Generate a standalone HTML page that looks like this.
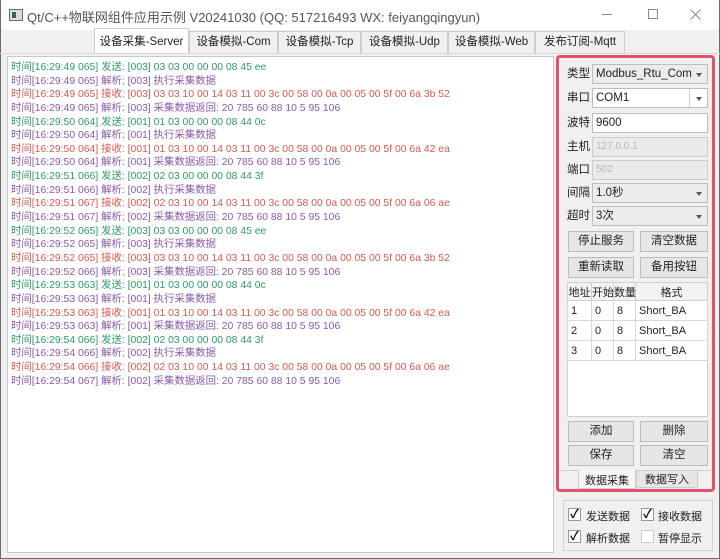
<!DOCTYPE html>
<html><head><meta charset="utf-8"><style>
*{box-sizing:border-box;margin:0;padding:0}
body{width:720px;height:559px;overflow:hidden;background:#f0f0f0;font-family:"Liberation Sans","Noto Sans CJK SC",sans-serif;font-size:11px;color:#222;position:relative}
.a{position:absolute}
#win{left:0;top:0;width:720px;height:559px;border:1px solid #6a6a6a;border-top:none}
#title{left:0;top:0;width:720px;height:30px;background:#fff;font-size:13px;color:#555}
.tab{position:absolute;top:31px;height:22px;border:1px solid #ccc;border-bottom:none;background:#f0f0f0;text-align:center;line-height:21px;font-size:11.5px;color:#222}
.tab.sel{top:28px;height:25px;background:#fff;line-height:26px}
#log{left:7px;top:56px;width:547px;height:497px;background:#fff;border:1px solid #c8c8c8;padding:4px 0 0 3px}
#log div{height:13.65px;line-height:13.65px;font-size:10.4px;white-space:nowrap}
.g{color:#2f9a6a}.p{color:#8a5aab}.r{color:#d65a55}
#panel{left:556px;top:55px;width:159px;height:437px;border:3px solid #e8506a;border-radius:4px;background:#f0f0f0}
.lbl{position:absolute;left:567px;font-size:11.5px;line-height:20px;height:20px}
.inp{position:absolute;left:592px;width:116px;height:20px;border:1px solid #bdbdbd;background:#fff;padding-left:3px;line-height:18px;font-size:11.5px}
.cb{background:#ececec}
.dis{background:#eaeaea;color:#b8b8b8;border-color:#ccc}
.arr{position:absolute;right:5px;top:8px;border-left:3px solid transparent;border-right:3px solid transparent;border-top:4px solid #555}
.btn{position:absolute;height:21px;border:1px solid #bcbcbc;background:#e6e6e6;text-align:center;line-height:19px;font-size:11.5px}
table{position:absolute;left:567px;top:282px;width:141px;border-collapse:collapse;font-size:11px;table-layout:fixed}
td{border:1px solid #d8d8d8;height:20px;padding-left:3px;background:#fff;white-space:nowrap}
th{border:1px solid #d0d0d0;height:18px;font-weight:normal;background:#f2f2f2;white-space:nowrap;padding:0;font-size:11px}
.chk{position:absolute;width:13px;height:13px;border:1px solid #999;background:#fff;font-size:12px;line-height:11px;text-align:center;font-weight:bold;color:#111}
</style></head><body>
<div id="title" class="a">
<div class="a" style="left:9px;top:9px;width:14px;height:12px;border:1px solid #666;background:#ddd"><div class="a" style="left:2px;top:2px;width:4px;height:6px;background:#2a6a60"></div></div>
<div class="a" style="left:27px;top:7px">Qt/C++物联网组件应用示例 V20241030 (QQ: 517216493 WX: feiyangqingyun)</div>
<div class="a" style="left:602px;top:14px;width:10px;height:1px;background:#888"></div>
<div class="a" style="left:648px;top:9px;width:10px;height:10px;border:1px solid #888"></div>
<svg class="a" style="left:690px;top:9px" width="11" height="11"><path d="M0.5 0.5L10.5 10.5M10.5 0.5L0.5 10.5" stroke="#888" stroke-width="1"/></svg>
</div>
<div id="win" class="a"></div>
<div class="a" style="left:0;top:53px;width:720px;height:1px;background:#d8d8d8"></div>
<div class="tab sel" style="left:94px;width:95px">设备采集-Server</div>
<div class="tab" style="left:189px;width:89px">设备模拟-Com</div>
<div class="tab" style="left:278px;width:83px">设备模拟-Tcp</div>
<div class="tab" style="left:361px;width:87px">设备模拟-Udp</div>
<div class="tab" style="left:448px;width:87px">设备模拟-Web</div>
<div class="tab" style="left:535px;width:90px">发布订阅-Mqtt</div>
<div id="log" class="a">
<div class="g">时间[16:29:49 065] 发送: [003] 03 03 00 00 00 08 45 ee</div>
<div class="p">时间[16:29:49 065] 解析: [003] 执行采集数据</div>
<div class="r">时间[16:29:49 065] 接收: [003] 03 03 10 00 14 03 11 00 3c 00 58 00 0a 00 05 00 5f 00 6a 3b 52</div>
<div class="p">时间[16:29:49 065] 解析: [003] 采集数据返回: 20 785 60 88 10 5 95 106</div>
<div class="g">时间[16:29:50 064] 发送: [001] 01 03 00 00 00 08 44 0c</div>
<div class="p">时间[16:29:50 064] 解析: [001] 执行采集数据</div>
<div class="r">时间[16:29:50 064] 接收: [001] 01 03 10 00 14 03 11 00 3c 00 58 00 0a 00 05 00 5f 00 6a 42 ea</div>
<div class="p">时间[16:29:50 064] 解析: [001] 采集数据返回: 20 785 60 88 10 5 95 106</div>
<div class="g">时间[16:29:51 066] 发送: [002] 02 03 00 00 00 08 44 3f</div>
<div class="p">时间[16:29:51 066] 解析: [002] 执行采集数据</div>
<div class="r">时间[16:29:51 067] 接收: [002] 02 03 10 00 14 03 11 00 3c 00 58 00 0a 00 05 00 5f 00 6a 06 ae</div>
<div class="p">时间[16:29:51 067] 解析: [002] 采集数据返回: 20 785 60 88 10 5 95 106</div>
<div class="g">时间[16:29:52 065] 发送: [003] 03 03 00 00 00 08 45 ee</div>
<div class="p">时间[16:29:52 065] 解析: [003] 执行采集数据</div>
<div class="r">时间[16:29:52 065] 接收: [003] 03 03 10 00 14 03 11 00 3c 00 58 00 0a 00 05 00 5f 00 6a 3b 52</div>
<div class="p">时间[16:29:52 066] 解析: [003] 采集数据返回: 20 785 60 88 10 5 95 106</div>
<div class="g">时间[16:29:53 063] 发送: [001] 01 03 00 00 00 08 44 0c</div>
<div class="p">时间[16:29:53 063] 解析: [001] 执行采集数据</div>
<div class="r">时间[16:29:53 063] 接收: [001] 01 03 10 00 14 03 11 00 3c 00 58 00 0a 00 05 00 5f 00 6a 42 ea</div>
<div class="p">时间[16:29:53 063] 解析: [001] 采集数据返回: 20 785 60 88 10 5 95 106</div>
<div class="g">时间[16:29:54 066] 发送: [002] 02 03 00 00 00 08 44 3f</div>
<div class="p">时间[16:29:54 066] 解析: [002] 执行采集数据</div>
<div class="r">时间[16:29:54 066] 接收: [002] 02 03 10 00 14 03 11 00 3c 00 58 00 0a 00 05 00 5f 00 6a 06 ae</div>
<div class="p">时间[16:29:54 067] 解析: [002] 采集数据返回: 20 785 60 88 10 5 95 106</div>
</div>
<div id="panel" class="a"></div>
<div class="lbl" style="top:64px">类型</div><div class="inp cb" style="top:64px">Modbus_Rtu_Com<span class="arr"></span></div>
<div class="lbl" style="top:88px">串口</div><div class="inp" style="top:88px">COM1<span class="a" style="left:96px;top:0;width:1px;height:18px;background:#ccc"></span><span class="arr"></span></div>
<div class="lbl" style="top:113px">波特</div><div class="inp" style="top:113px">9600</div>
<div class="lbl" style="top:137px">主机</div><div class="inp dis" style="top:137px;font-size:10px">127.0.0.1</div>
<div class="lbl" style="top:160px">端口</div><div class="inp dis" style="top:160px;font-size:10px">502</div>
<div class="lbl" style="top:183px">间隔</div><div class="inp cb" style="top:183px">1.0秒<span class="arr"></span></div>
<div class="lbl" style="top:206px">超时</div><div class="inp cb" style="top:206px">3次<span class="arr"></span></div>
<div class="btn" style="left:568px;top:231px;width:66px">停止服务</div>
<div class="btn" style="left:640px;top:231px;width:68px">清空数据</div>
<div class="btn" style="left:568px;top:257px;width:66px">重新读取</div>
<div class="btn" style="left:640px;top:257px;width:68px">备用按钮</div>
<div class="a" style="left:567px;top:282px;width:141px;height:135px;background:#fff;border:1px solid #cfcfcf"></div>
<table>
<colgroup><col style="width:24px"><col style="width:22px"><col style="width:22px"><col></colgroup>
<tr><th>地址</th><th>开始</th><th>数量</th><th>格式</th></tr>
<tr><td>1</td><td>0</td><td>8</td><td>Short_BA</td></tr>
<tr><td>2</td><td>0</td><td>8</td><td>Short_BA</td></tr>
<tr><td>3</td><td>0</td><td>8</td><td>Short_BA</td></tr>
</table>
<div class="btn" style="left:568px;top:421px;width:66px">添加</div>
<div class="btn" style="left:640px;top:421px;width:68px">删除</div>
<div class="btn" style="left:568px;top:445px;width:66px">保存</div>
<div class="btn" style="left:640px;top:445px;width:68px">清空</div>
<div class="a" style="left:559px;top:470px;width:153px;height:1px;background:#d0d0d0"></div>
<div class="a" style="left:578px;top:470px;width:58px;height:19px;background:#f5f5f5;border:1px solid #d0d0d0;border-top:none;text-align:center;line-height:22px">数据采集</div>
<div class="a" style="left:636px;top:471px;width:62px;height:17px;background:#e6e6e6;border:1px solid #ccc;border-top:none;text-align:center;line-height:18px">数据写入</div>
<div class="a" style="left:563px;top:500px;width:150px;height:51px;border:1px solid #d0d0d0"></div>
<div class="chk" style="left:568px;top:508px">✓</div><div class="a" style="left:586px;top:508px">发送数据</div>
<div class="chk" style="left:641px;top:508px">✓</div><div class="a" style="left:658px;top:508px">接收数据</div>
<div class="chk" style="left:568px;top:530px">✓</div><div class="a" style="left:586px;top:530px">解析数据</div>
<div class="chk" style="left:641px;top:530px;border-color:#ccc"></div><div class="a" style="left:658px;top:530px">暂停显示</div>
</body></html>
